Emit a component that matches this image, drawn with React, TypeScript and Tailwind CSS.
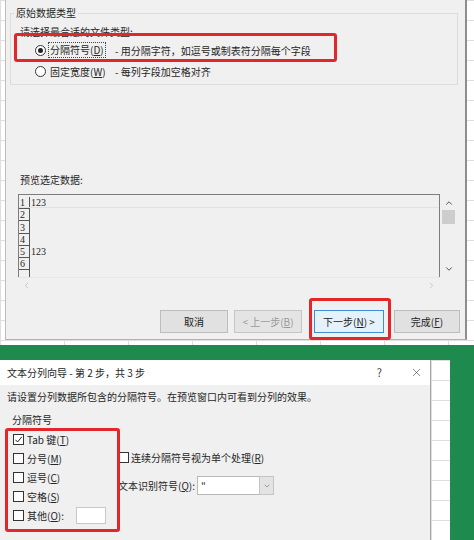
import { ChevronUp, ChevronDown, ChevronLeft, ChevronRight, X } from 'lucide-react';

const gridBg =
    'bg-white bg-[linear-gradient(#dedede_1px,transparent_1px),linear-gradient(90deg,#dedede_1px,transparent_1px)] bg-size-[64px_20px]';

function Radio({ checked }: { checked?: boolean }) {
    return (
        <span className="w-[11px] h-[11px] rounded-full border border-[#333] bg-white flex items-center justify-center shrink-0">
            {checked && <span className="w-[5px] h-[5px] rounded-full bg-[#222]" />}
        </span>
    );
}

function Check({ checked }: { checked?: boolean }) {
    return (
        <span className="w-[11px] h-[11px] border border-[#333] bg-white flex items-center justify-center shrink-0">
            {checked && (
                <svg width="9" height="9" viewBox="0 0 9 9">
                    <polyline points="1.5,4.8 3.6,7 7.8,1.8" fill="none" stroke="#222" strokeWidth="1" />
                </svg>
            )}
        </span>
    );
}

function Key({ k }: { k: string }) {
    return (
        <>
            (<span className="underline underline-offset-1">{k}</span>)
        </>
    );
}

function Btn({ children, w, primary, disabled }: { children: React.ReactNode; w: string; primary?: boolean; disabled?: boolean }) {
    return (
        <div
            className={
                'h-[23px] flex items-center justify-center border text-[10px] ' +
                w +
                ' ' +
                (primary
                    ? 'border-[#3c8fd6] bg-[#e5f1fb] text-[#222]'
                    : disabled
                    ? 'border-[#c6c6c6] bg-[#e4e4e4] text-[#9a9a9a]'
                    : 'border-[#bdbdbd] bg-[#e1e1e1] text-[#222]')
            }
        >
            {children}
        </div>
    );
}

// 第 7 行只露出一部分，不显示数字
const rows = ['1', '2', '3', '4', '5', '6', ''];

export default function App() {
    return (
        <div className="w-[474px] h-[540px] overflow-hidden flex flex-col bg-white text-[#262626] font-['Noto_Sans_CJK_SC','Microsoft_YaHei',sans-serif]">
            {/* 第 1 步对话框（截取部分） */}
            <div className={'h-[345px] flex shrink-0 ' + gridBg}>
                <div className="w-[5px] shrink-0" />
                <div className="relative w-[462px] h-[340px] shrink-0 bg-[#f0f0f0] border-l border-l-[#bcbcbc] border-r-2 border-r-[#8e8e8e] border-b border-b-[#b4b4b4] flex flex-col">
                    <fieldset className="ml-[4px] mt-[7px] w-[448px] h-[78px] border border-[#dcdcdc]">
                        <legend className="ml-[3px] px-[2px] text-[10px] leading-[12px]">原始数据类型</legend>
                        <div className="pt-[7px] pl-[9px] text-[10px] leading-[12px]">请选择最合适的文件类型:</div>
                        <div className="mt-[4px] h-[16px] flex items-center pl-[24px] text-[10px]">
                            <Radio checked />
                            <div className="w-[69px] pl-[2px] shrink-0">
                                <span className="border border-dotted border-[#444] px-[1px] leading-[14px] inline-block">
                                    分隔符号<Key k="D" />
                                </span>
                            </div>
                            <span>- 用分隔字符，如逗号或制表符分隔每个字段</span>
                        </div>
                        <div className="mt-[5px] h-[16px] flex items-center pl-[24px] text-[10px]">
                            <Radio />
                            <div className="w-[69px] pl-[3px] shrink-0">
                                <span className="px-[1px] leading-[14px]">
                                    固定宽度<Key k="W" />
                                </span>
                            </div>
                            <span>- 每列字段加空格对齐</span>
                        </div>
                    </fieldset>

                    <div className="mt-[89px] ml-[14px] text-[10px] leading-[12px]">预览选定数据:</div>

                    <div className="mt-[8px] ml-[12px] w-[439px] h-[99px] flex flex-col">
                        <div className="h-[83px] flex">
                            <div className="w-[422px] h-full border-t border-l border-r border-[#7d7d7d] overflow-hidden relative">
                                <div className="absolute left-0 right-0 top-[12px] border-t border-[#e2e2e2]" />
                                <div className="pt-[2px] flex flex-col font-['Liberation_Serif',serif] text-[10px]">
                                    {rows.map((r, i) => (
                                        <div key={i} className="h-[12.2px] flex items-end">
                                            <div className="w-[11px] h-full border-r border-b border-[#555] leading-[11px] pl-[1px] flex items-end">
                                                {r}
                                            </div>
                                            <div className="pl-[1px] leading-[11px] h-full flex items-end pb-[1px]">
                                                {r === '1' || r === '5' ? '123' : ''}
                                            </div>
                                        </div>
                                    ))}
                                </div>
                            </div>
                            <div className="w-[17px] h-full flex flex-col items-center">
                                <ChevronUp size={10} strokeWidth={2} className="mt-[4px] text-[#333]" />
                                <div className="mt-[2px] w-[13px] h-[14px] bg-[#cdcdcd]" />
                                <div className="flex-1" />
                                <ChevronDown size={10} strokeWidth={2} className="mb-[3px] text-[#333]" />
                            </div>
                        </div>
                        <div className="h-[16px] w-[422px] border-t border-[#e6e6e6] flex items-center justify-between px-[4px]">
                            <ChevronLeft size={9} strokeWidth={1.5} className="text-[#a8a8a8]" />
                            <ChevronRight size={9} strokeWidth={1.5} className="text-[#a8a8a8]" />
                        </div>
                    </div>

                    <div className="mt-[17px] ml-[154px] flex">
                        <Btn w="w-[68px]">取消</Btn>
                        <div className="w-[6px]" />
                        <Btn w="w-[68px]" disabled>
                            &lt; 上一步<Key k="B" />
                        </Btn>
                        <div className="w-[12px]" />
                        <Btn w="w-[70px]" primary>
                            下一步<Key k="N" /> &gt;
                        </Btn>
                        <div className="w-[10px]" />
                        <Btn w="w-[66px]">
                            完成<Key k="F" />
                        </Btn>
                    </div>

                    {/* 红色标注框 */}
                    <div className="absolute left-[8px] top-[33px] w-[323px] h-[29px] border-[3px] border-[#e3262a] rounded-[3px]" />
                    <div className="absolute left-[303px] top-[298px] w-[82px] h-[42px] border-[3px] border-[#e3262a] rounded-[3px]" />
                </div>
                <div className="flex-1" />
            </div>

            <div className="h-[15px] shrink-0 bg-[#1f8a4e]" />

            {/* 第 2 步对话框 */}
            <div className="flex flex-1">
                <div className="relative w-[431px] shrink-0 bg-[#f0f0f0] border-r border-[#a5a5a5] flex flex-col text-[10px]">
                    <div className="h-[25px] bg-white flex items-center pl-[7px] pr-[7px]">
                        <span className="leading-[12px]">文本分列向导 - 第 2 步，共 3 步</span>
                        <span className="ml-auto text-[11px] text-[#444]">?</span>
                        <X size={13} strokeWidth={1} className="ml-[28px] text-[#333]" />
                    </div>
                    <div className="pt-[6px] pl-[7px] leading-[12px]">请设置分列数据所包含的分隔符号。在预览窗口内可看到分列的效果。</div>
                    <div className="mt-[11px] pl-[12px] leading-[12px]">分隔符号</div>
                    <div className="mt-[4px] flex">
                        <div className="w-[118px] pl-[13px] flex flex-col">
                            <div className="h-[19px] flex items-center gap-[3px]">
                                <Check checked />
                                <span>
                                    Tab 键<Key k="T" />
                                </span>
                            </div>
                            <div className="h-[19px] flex items-center gap-[3px]">
                                <Check />
                                <span>
                                    分号<Key k="M" />
                                </span>
                            </div>
                            <div className="h-[19px] flex items-center gap-[3px]">
                                <Check />
                                <span>
                                    逗号<Key k="C" />
                                </span>
                            </div>
                            <div className="h-[19px] flex items-center gap-[3px]">
                                <Check />
                                <span>
                                    空格<Key k="S" />
                                </span>
                            </div>
                            <div className="h-[19px] flex items-center gap-[3px]">
                                <Check />
                                <span>
                                    其他<Key k="O" />:
                                </span>
                                <div className="ml-[9px] w-[30px] h-[17px] bg-white border border-[#c8c8c8]" />
                            </div>
                        </div>
                        <div className="flex flex-col pt-[18px]">
                            <div className="h-[18px] flex items-center gap-[2px]">
                                <Check />
                                <span>
                                    连续分隔符号视为单个处理<Key k="R" />
                                </span>
                            </div>
                            <div className="mt-[10px] h-[19px] flex items-center">
                                <span className="w-[79px]">
                                    文本识别符号<Key k="Q" />:
                                </span>
                                <div className="w-[62px] h-full bg-white border border-[#b9b9b9] border-r-0 pl-[3px] leading-[17px]">"</div>
                                <div className="w-[15px] h-full bg-[#e3e3e3] border border-[#c4c4c4] flex items-center justify-center">
                                    <ChevronDown size={8} strokeWidth={1.5} className="text-[#555]" />
                                </div>
                            </div>
                        </div>
                    </div>

                    {/* 红色标注框 */}
                    <div className="absolute left-[5px] top-[68px] w-[115px] h-[104px] border-[3px] border-[#e3262a] rounded-[3px]" />
                </div>
                <div className={'w-[19px] shrink-0 ' + gridBg} />
                <div className="flex-1 bg-[#1f8a4e]" />
            </div>
        </div>
    );
}
